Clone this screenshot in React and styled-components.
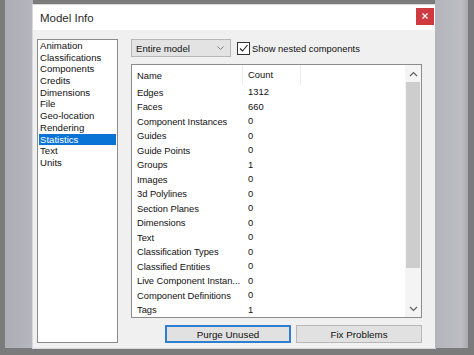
import React from 'react'
import styled, { createGlobalStyle } from 'styled-components'

const GlobalStyle = createGlobalStyle`
  *, *::before, *::after { box-sizing: border-box; }
  html, body { margin: 0; padding: 0; background: #7b7b7b; }
  body { font-family: "Liberation Sans", Arial, sans-serif; }
`

const pages = ['Animation', 'Classifications', 'Components', 'Credits', 'Dimensions', 'File', 'Geo-location', 'Rendering', 'Statistics', 'Text', 'Units']

const stats = [
  ['Edges', '1312'],
  ['Faces', '660'],
  ['Component Instances', '0'],
  ['Guides', '0'],
  ['Guide Points', '0'],
  ['Groups', '1'],
  ['Images', '0'],
  ['3d Polylines', '0'],
  ['Section Planes', '0'],
  ['Dimensions', '0'],
  ['Text', '0'],
  ['Classification Types', '0'],
  ['Classified Entities', '0'],
  ['Live Component Instan...', '0'],
  ['Component Definitions', '0'],
  ['Tags', '1'],
]

function App() {
  return (
    <>
      <GlobalStyle />
      <Screen>
        <Gutter $w={28} $ml={5} />
        <Dialog>
          <TitleBar>
            <Title>Model Info</Title>
            <CloseButton>
              <svg width="8" height="8" viewBox="0 0 8 8">
                <path d="M1.5 1.5L6.5 6.5M6.5 1.5L1.5 6.5" stroke="#fff" strokeWidth="1.3" />
              </svg>
            </CloseButton>
          </TitleBar>
          <Body>
            <PageList>
              {pages.map(p => (
                <PageItem key={p} $selected={p === 'Statistics'}>{p}</PageItem>
              ))}
            </PageList>
            <Main>
              <Toolbar>
                <Select>
                  <span>Entire model</span>
                  <svg width="9" height="6" viewBox="0 0 9 6">
                    <path d="M1.5 1.5l3 3 3-3" stroke="#808080" strokeWidth="1" fill="none" />
                  </svg>
                </Select>
                <CheckLabel>
                  <CheckBox>
                    <svg width="11" height="11" viewBox="0 0 11 11">
                      <path d="M2 5.5l2.5 2.5L9.5 2" stroke="#222" strokeWidth="1.1" fill="none" />
                    </svg>
                  </CheckBox>
                  Show nested components
                </CheckLabel>
              </Toolbar>
              <Table>
                <Rows>
                  <HeaderRow>
                    <NameCell>Name</NameCell>
                    <CountCell $sep>Count</CountCell>
                  </HeaderRow>
                  {stats.map(([n, c]) => (
                    <Row key={n}>
                      <NameCell>{n}</NameCell>
                      <CountCell>{c}</CountCell>
                    </Row>
                  ))}
                </Rows>
                <ScrollBar>
                  <Arrow>
                    <svg width="9" height="6" viewBox="0 0 9 6">
                      <path d="M1 5l3.5-3.5L8 5" stroke="#606060" strokeWidth="1.2" fill="none" />
                    </svg>
                  </Arrow>
                  <Track>
                    <Thumb />
                  </Track>
                  <Arrow>
                    <svg width="9" height="6" viewBox="0 0 9 6">
                      <path d="M1 1l3.5 3.5L8 1" stroke="#606060" strokeWidth="1.2" fill="none" />
                    </svg>
                  </Arrow>
                </ScrollBar>
              </Table>
              <Buttons>
                <Button $focused>Purge Unused</Button>
                <Button>Fix Problems</Button>
              </Buttons>
            </Main>
          </Body>
        </Dialog>
        <Gutter $w={33} $ml={0} $right />
      </Screen>
    </>
  )
}

export default App

const Screen = styled.div`
width:474px;
height:355px;
display:flex;
align-items:flex-start;
background:#7b7b7b;
overflow:hidden;
`
const Gutter = styled.div`
width:${p => p.$w}px;
margin-left:${p => p.$ml}px;
height:348px;
flex-shrink:0;
background:${p => p.$right
  ? 'linear-gradient(90deg, #b4b4bc, #bdbdc3 80%, #a9a9ae)'
  : 'linear-gradient(90deg, #adadb5, #b6b6be)'};
`
const Dialog = styled.div`
width:402px;
height:343px;
margin-top:5px;
flex-shrink:0;
display:flex;
flex-direction:column;
background:#f0f0f0;
box-shadow:0 0 0 1px #d8d8dc;
`
const TitleBar = styled.div`
height:25px;
background:#fff;
display:flex;
align-items:center;
justify-content:space-between;
padding:0 1px 0 7px;
`
const Title = styled.div`
font-size:11.5px;
color:#2a2a2a;
`
const CloseButton = styled.div`
width:18px;
height:17px;
margin-top:-3px;
background:#cf3a40;
display:flex;
align-items:center;
justify-content:center;
`
const Body = styled.div`
flex:1;
display:flex;
padding:9px 13px 5px 4px;
gap:13px;
`
const PageList = styled.div`
width:81px;
border:1px solid #8c8c8c;
background:#fff;
padding:0 1px;
`
const PageItem = styled.div`
height:11.7px;
line-height:11.7px;
font-size:9.6px;
padding-left:1px;
white-space:nowrap;
color:${p => p.$selected ? '#fff' : '#111'};
background:${p => p.$selected ? '#0a74d6' : 'transparent'};
`
const Main = styled.div`
flex:1;
display:flex;
flex-direction:column;
gap:7px;
`
const Toolbar = styled.div`
height:18px;
display:flex;
align-items:center;
gap:6px;
`
const Select = styled.div`
width:100px;
height:18px;
border:1px solid #b8b8b8;
background:#e3e3e3;
display:flex;
align-items:center;
justify-content:space-between;
padding:0 5px 0 4px;
font-size:9.6px;
color:#111;
`
const CheckLabel = styled.div`
display:flex;
align-items:center;
gap:2px;
font-size:9.4px;
color:#111;
white-space:nowrap;
`
const CheckBox = styled.div`
width:13px;
height:13px;
border:1px solid #333;
background:#fff;
display:flex;
`
const Table = styled.div`
height:254px;
border:1px solid #8c8c8c;
background:#fff;
display:flex;
padding-left:1px;
`
const Rows = styled.div`
flex:1;
`
const Row = styled.div`
height:14.5px;
display:flex;
align-items:center;
font-size:9.4px;
color:#111;
white-space:nowrap;
`
const HeaderRow = styled(Row)`
height:20px;
`
const NameCell = styled.div`
width:109px;
flex-shrink:0;
padding-left:4px;
letter-spacing:-0.05px;
`
const CountCell = styled.div`
width:${p => p.$sep ? '59px' : 'auto'};
padding-left:5px;
border-left:${p => p.$sep ? '1px solid #ececec' : '1px solid transparent'};
border-right:${p => p.$sep ? '1px solid #ececec' : 'none'};
line-height:20px;
`
const ScrollBar = styled.div`
width:16px;
display:flex;
flex-direction:column;
background:#f4f4f4;
`
const Arrow = styled.div`
height:17px;
display:flex;
align-items:center;
justify-content:center;
`
const Track = styled.div`
flex:1;
padding:0 1px;
`
const Thumb = styled.div`
height:186px;
background:#cdcdcd;
`
const Buttons = styled.div`
height:18px;
display:flex;
justify-content:flex-end;
gap:5px;
`
const Button = styled.div`
width:126px;
border:${p => p.$focused ? '2px solid #2f7fcf' : '1px solid #b8b8b8'};
background:#e1e1e1;
display:flex;
align-items:center;
justify-content:center;
font-size:9.8px;
color:#111;
`
